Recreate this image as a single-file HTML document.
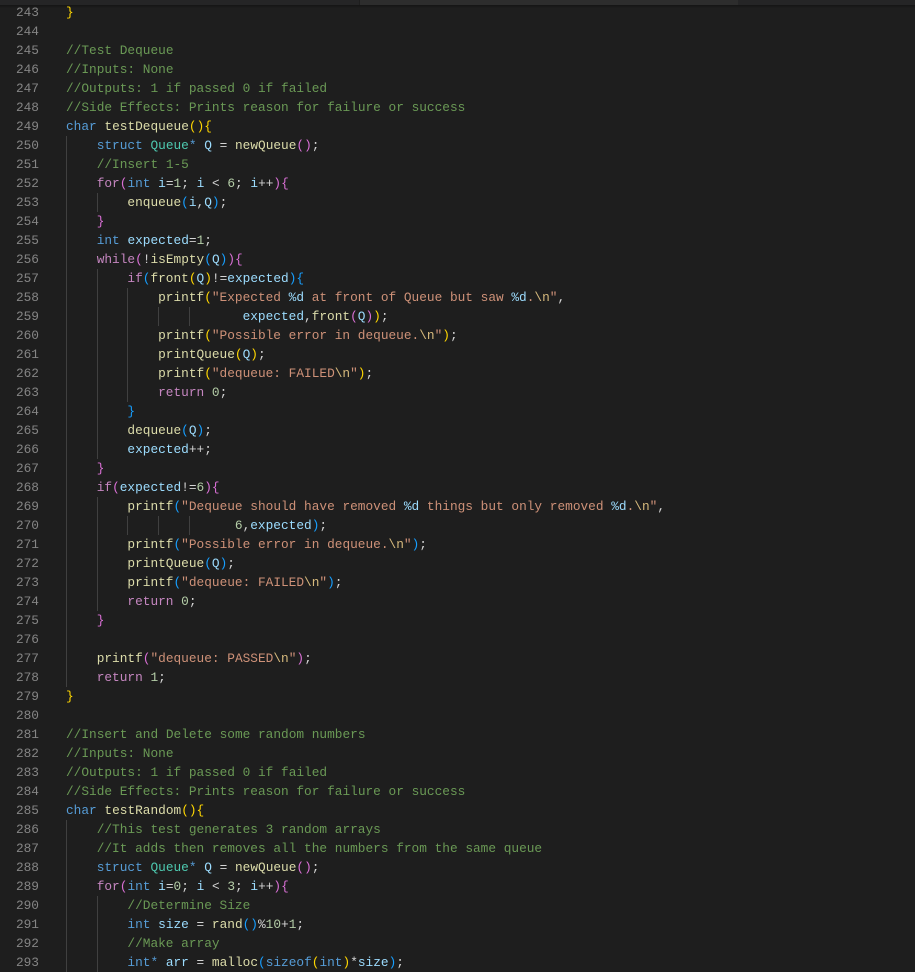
<!DOCTYPE html>
<html><head><meta charset="utf-8"><style>
html,body{margin:0;padding:0;background:#1e1e1e;width:915px;height:958px;overflow:hidden}
.top{position:absolute;left:0;top:0;width:915px;height:5px;background:#252526}
.top .t{position:absolute;left:359px;top:0;width:378px;height:5px;background:#2d2d2d;border-left:1px solid #1e1e1e}
.shadow{position:absolute;left:0;top:5px;width:915px;height:3px;background:linear-gradient(#141414,#1e1e1e)}
.ed{position:absolute;left:0;top:3px;font-family:"Liberation Mono",monospace;font-size:12.8px;line-height:19px;color:#d4d4d4}
.l{height:19px;position:relative;width:915px}
.n{position:absolute;left:0;width:39px;text-align:right;color:#858585}
.c{position:absolute;left:66px;white-space:pre}
i{display:inline-block;width:4ch;height:19px;vertical-align:top;box-sizing:border-box;border-left:1px solid #404040}
.k{color:#569cd6}.p{color:#c586c0}.f{color:#dcdcaa}.v{color:#9cdcfe}.t{color:#4ec9b0}.s{color:#ce9178}.m{color:#6a9955}.u{color:#b5cea8}.e{color:#9cdcfe}.x{color:#d7ba7d}
.b1{color:#ffd700}.b2{color:#da70d6}.b3{color:#179fff}
</style></head><body>
<div class="top"><div class="t"></div></div><div class="shadow"></div>
<div class="ed">
<div class="l"><span class="n">243</span><span class="c"><span class="b1">}</span></span></div>
<div class="l"><span class="n">244</span><span class="c"></span></div>
<div class="l"><span class="n">245</span><span class="c"><span class="m">//Test Dequeue</span></span></div>
<div class="l"><span class="n">246</span><span class="c"><span class="m">//Inputs: None</span></span></div>
<div class="l"><span class="n">247</span><span class="c"><span class="m">//Outputs: 1 if passed 0 if failed</span></span></div>
<div class="l"><span class="n">248</span><span class="c"><span class="m">//Side Effects: Prints reason for failure or success</span></span></div>
<div class="l"><span class="n">249</span><span class="c"><span class="k">char</span> <span class="f">testDequeue</span><span class="b1">(){</span></span></div>
<div class="l"><span class="n">250</span><span class="c"><i></i><span class="k">struct</span> <span class="t">Queue</span><span class="k">*</span> <span class="v">Q</span> = <span class="f">newQueue</span><span class="b2">()</span>;</span></div>
<div class="l"><span class="n">251</span><span class="c"><i></i><span class="m">//Insert 1-5</span></span></div>
<div class="l"><span class="n">252</span><span class="c"><i></i><span class="p">for</span><span class="b2">(</span><span class="k">int</span> <span class="v">i</span>=<span class="u">1</span>; <span class="v">i</span> &lt; <span class="u">6</span>; <span class="v">i</span>++<span class="b2">){</span></span></div>
<div class="l"><span class="n">253</span><span class="c"><i></i><i></i><span class="f">enqueue</span><span class="b3">(</span><span class="v">i</span>,<span class="v">Q</span><span class="b3">)</span>;</span></div>
<div class="l"><span class="n">254</span><span class="c"><i></i><span class="b2">}</span></span></div>
<div class="l"><span class="n">255</span><span class="c"><i></i><span class="k">int</span> <span class="v">expected</span>=<span class="u">1</span>;</span></div>
<div class="l"><span class="n">256</span><span class="c"><i></i><span class="p">while</span><span class="b2">(</span>!<span class="f">isEmpty</span><span class="b3">(</span><span class="v">Q</span><span class="b3">)</span><span class="b2">){</span></span></div>
<div class="l"><span class="n">257</span><span class="c"><i></i><i></i><span class="p">if</span><span class="b3">(</span><span class="f">front</span><span class="b1">(</span><span class="v">Q</span><span class="b1">)</span>!=<span class="v">expected</span><span class="b3">){</span></span></div>
<div class="l"><span class="n">258</span><span class="c"><i></i><i></i><i></i><span class="f">printf</span><span class="b1">(</span><span class="s">"Expected </span><span class="e">%d</span><span class="s"> at front of Queue but saw </span><span class="e">%d</span><span class="s">.</span><span class="x">\n</span><span class="s">"</span>,</span></div>
<div class="l"><span class="n">259</span><span class="c"><i></i><i></i><i></i><i></i><i></i>   <span class="v">expected</span>,<span class="f">front</span><span class="b2">(</span><span class="v">Q</span><span class="b2">)</span><span class="b1">)</span>;</span></div>
<div class="l"><span class="n">260</span><span class="c"><i></i><i></i><i></i><span class="f">printf</span><span class="b1">(</span><span class="s">"Possible error in dequeue.</span><span class="x">\n</span><span class="s">"</span><span class="b1">)</span>;</span></div>
<div class="l"><span class="n">261</span><span class="c"><i></i><i></i><i></i><span class="f">printQueue</span><span class="b1">(</span><span class="v">Q</span><span class="b1">)</span>;</span></div>
<div class="l"><span class="n">262</span><span class="c"><i></i><i></i><i></i><span class="f">printf</span><span class="b1">(</span><span class="s">"dequeue: FAILED</span><span class="x">\n</span><span class="s">"</span><span class="b1">)</span>;</span></div>
<div class="l"><span class="n">263</span><span class="c"><i></i><i></i><i></i><span class="p">return</span> <span class="u">0</span>;</span></div>
<div class="l"><span class="n">264</span><span class="c"><i></i><i></i><span class="b3">}</span></span></div>
<div class="l"><span class="n">265</span><span class="c"><i></i><i></i><span class="f">dequeue</span><span class="b3">(</span><span class="v">Q</span><span class="b3">)</span>;</span></div>
<div class="l"><span class="n">266</span><span class="c"><i></i><i></i><span class="v">expected</span>++;</span></div>
<div class="l"><span class="n">267</span><span class="c"><i></i><span class="b2">}</span></span></div>
<div class="l"><span class="n">268</span><span class="c"><i></i><span class="p">if</span><span class="b2">(</span><span class="v">expected</span>!=<span class="u">6</span><span class="b2">){</span></span></div>
<div class="l"><span class="n">269</span><span class="c"><i></i><i></i><span class="f">printf</span><span class="b3">(</span><span class="s">"Dequeue should have removed </span><span class="e">%d</span><span class="s"> things but only removed </span><span class="e">%d</span><span class="s">.</span><span class="x">\n</span><span class="s">"</span>,</span></div>
<div class="l"><span class="n">270</span><span class="c"><i></i><i></i><i></i><i></i><i></i>  <span class="u">6</span>,<span class="v">expected</span><span class="b3">)</span>;</span></div>
<div class="l"><span class="n">271</span><span class="c"><i></i><i></i><span class="f">printf</span><span class="b3">(</span><span class="s">"Possible error in dequeue.</span><span class="x">\n</span><span class="s">"</span><span class="b3">)</span>;</span></div>
<div class="l"><span class="n">272</span><span class="c"><i></i><i></i><span class="f">printQueue</span><span class="b3">(</span><span class="v">Q</span><span class="b3">)</span>;</span></div>
<div class="l"><span class="n">273</span><span class="c"><i></i><i></i><span class="f">printf</span><span class="b3">(</span><span class="s">"dequeue: FAILED</span><span class="x">\n</span><span class="s">"</span><span class="b3">)</span>;</span></div>
<div class="l"><span class="n">274</span><span class="c"><i></i><i></i><span class="p">return</span> <span class="u">0</span>;</span></div>
<div class="l"><span class="n">275</span><span class="c"><i></i><span class="b2">}</span></span></div>
<div class="l"><span class="n">276</span><span class="c"><i></i></span></div>
<div class="l"><span class="n">277</span><span class="c"><i></i><span class="f">printf</span><span class="b2">(</span><span class="s">"dequeue: PASSED</span><span class="x">\n</span><span class="s">"</span><span class="b2">)</span>;</span></div>
<div class="l"><span class="n">278</span><span class="c"><i></i><span class="p">return</span> <span class="u">1</span>;</span></div>
<div class="l"><span class="n">279</span><span class="c"><span class="b1">}</span></span></div>
<div class="l"><span class="n">280</span><span class="c"></span></div>
<div class="l"><span class="n">281</span><span class="c"><span class="m">//Insert and Delete some random numbers</span></span></div>
<div class="l"><span class="n">282</span><span class="c"><span class="m">//Inputs: None</span></span></div>
<div class="l"><span class="n">283</span><span class="c"><span class="m">//Outputs: 1 if passed 0 if failed</span></span></div>
<div class="l"><span class="n">284</span><span class="c"><span class="m">//Side Effects: Prints reason for failure or success</span></span></div>
<div class="l"><span class="n">285</span><span class="c"><span class="k">char</span> <span class="f">testRandom</span><span class="b1">(){</span></span></div>
<div class="l"><span class="n">286</span><span class="c"><i></i><span class="m">//This test generates 3 random arrays</span></span></div>
<div class="l"><span class="n">287</span><span class="c"><i></i><span class="m">//It adds then removes all the numbers from the same queue</span></span></div>
<div class="l"><span class="n">288</span><span class="c"><i></i><span class="k">struct</span> <span class="t">Queue</span><span class="k">*</span> <span class="v">Q</span> = <span class="f">newQueue</span><span class="b2">()</span>;</span></div>
<div class="l"><span class="n">289</span><span class="c"><i></i><span class="p">for</span><span class="b2">(</span><span class="k">int</span> <span class="v">i</span>=<span class="u">0</span>; <span class="v">i</span> &lt; <span class="u">3</span>; <span class="v">i</span>++<span class="b2">){</span></span></div>
<div class="l"><span class="n">290</span><span class="c"><i></i><i></i><span class="m">//Determine Size</span></span></div>
<div class="l"><span class="n">291</span><span class="c"><i></i><i></i><span class="k">int</span> <span class="v">size</span> = <span class="f">rand</span><span class="b3">()</span>%<span class="u">10</span>+<span class="u">1</span>;</span></div>
<div class="l"><span class="n">292</span><span class="c"><i></i><i></i><span class="m">//Make array</span></span></div>
<div class="l"><span class="n">293</span><span class="c"><i></i><i></i><span class="k">int</span><span class="k">*</span> <span class="v">arr</span> = <span class="f">malloc</span><span class="b3">(</span><span class="k">sizeof</span><span class="b1">(</span><span class="k">int</span><span class="b1">)</span>*<span class="v">size</span><span class="b3">)</span>;</span></div>
</div>
</body></html>
